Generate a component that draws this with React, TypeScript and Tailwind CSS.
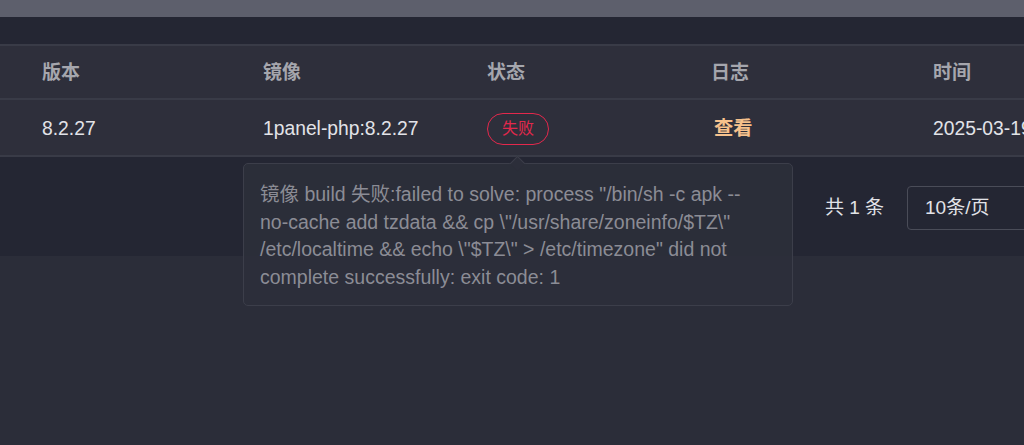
import React from 'react';

const font = { fontFamily: '"Liberation Sans", "Noto Sans CJK SC", sans-serif' };

const App: React.FC = () => {
  const headers = ['版本', '镜像', '状态', '日志', '时间'];
  const widths = ['w-[221px]', 'w-[224px]', 'w-[224px]', 'w-[222px]', 'flex-1'];

  return (
    <div className="relative h-[445px] w-[1024px] overflow-hidden bg-[#2b2d39]" style={font}>
      <div className="h-[17px] bg-[#5d5f6c]" />
      <div className="h-[27px] bg-[#242633]" />

      {/* table */}
      <div className="border-t-2 border-[#393b47] bg-[#2e2f3b]">
        <div className="flex h-[54px] items-center border-b-2 border-[#393b47] pl-[42px] pt-[2px] text-[19px] font-bold text-[#a5a6ad]">
          {headers.map((h, i) => (
            <div key={h} className={`${widths[i]} shrink-0 whitespace-nowrap`}>{h}</div>
          ))}
        </div>
        <div className="flex h-[57px] items-center border-b-2 border-[#393b47] pl-[42px] pt-[3px] text-[19.3px] text-[#e2e3e8]">
          <div className="w-[221px] shrink-0">8.2.27</div>
          <div className="w-[224px] shrink-0">1panel-php:8.2.27</div>
          <div className="w-[224px] shrink-0">
            <span className="inline-flex h-[32px] w-[62px] items-center justify-center rounded-full border-[1.5px] border-[#e3284c] text-[16px] text-[#e3284c]">失败</span>
          </div>
          <div className="w-[222px] shrink-0 pl-[3px] font-bold text-[#f6c18c]">查看</div>
          <div className="flex-1 overflow-hidden whitespace-nowrap">2025-03-19</div>
        </div>
      </div>

      {/* pagination */}
      <div className="flex h-[99px] items-center justify-end gap-[23px] bg-[#242633] pt-[3px]">
        <span className="text-[19px] text-[#e2e3e8]">共 1 条</span>
        <div className="-mr-[20px] flex h-[44px] w-[137px] items-center rounded-[4px] border border-[#4a4c58] pl-[17px] text-[19px] text-[#e2e3e8]">10条/页</div>
      </div>

      {/* tooltip */}
      <div className="absolute left-[243px] top-[163px] h-[143px] w-[550px] rounded-[5px] border border-[#3c3e4a] bg-[#2c2e3a]/95 pl-[16px] pr-[28px] pt-[17px] text-[19.5px] leading-[27.7px] text-[#8b8c95]">
        <div className="absolute -top-[6px] left-[268px] h-[11px] w-[11px] rotate-45 border-l border-t border-[#3c3e4a] bg-[#2c2e3a]" />
        镜像 build 失败:failed to solve: process "/bin/sh -c apk --<span className="whitespace-nowrap">no-cache</span> add tzdata &amp;&amp; cp \"/usr/share/zoneinfo/$TZ\" /etc/localtime &amp;&amp; echo \"$TZ\" &gt; /etc/timezone" did not complete successfully: exit code: 1
      </div>
    </div>
  );
};

export default App;
